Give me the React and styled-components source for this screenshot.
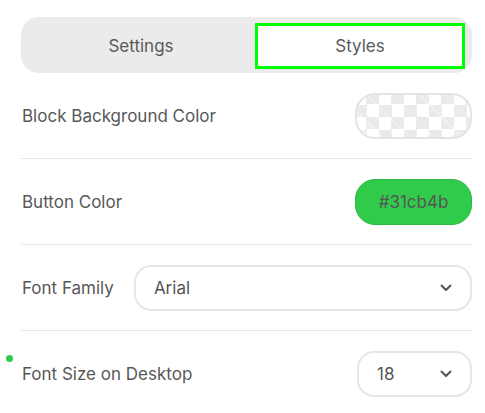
import React from "react";
import styled, { createGlobalStyle } from "styled-components";

const Global = createGlobalStyle`
  html, body { margin: 0; padding: 0; background: #fff; }
  body { font-family: Inter, "Noto Sans", "Liberation Sans", sans-serif; color: #575757; }
  * { box-sizing: border-box; }
`;

const Panel = styled.div`
  width: 485px;
  padding: 17px 13px 0 21px;
`;

const TabBar = styled.div`
  display: flex;
  height: 56px;
  padding: 6px 7px 4px 6px;
  background: #ebebeb;
  border-radius: 18px;
`;

const Tab = styled.div`
  display: flex;
  align-items: center;
  justify-content: center;
  height: 46px;
  font-size: 17px;
  color: #5a5a5a;
  ${(p) =>
    p.$active
      ? `width: 210px; background: #fff; border: 3px solid #00ff00;`
      : `flex: 1;`}
`;

const Row = styled.div`
  position: relative;
  display: flex;
  align-items: center;
  justify-content: space-between;
  gap: 20px;
  height: 86px;
  border-bottom: ${(p) => (p.$last ? "none" : "1px solid #e6e6e6")};
`;

const Label = styled.span`
  font-size: 17px;
  color: #585858;
  white-space: nowrap;
  padding-left: 1px;
`;

const Swatch = styled.div`
  width: 117px;
  height: 46px;
  border-radius: 20px;
  display: flex;
  align-items: center;
  justify-content: center;
  font-size: 17px;
  color: #555;
  ${(p) =>
    p.$color
      ? `background: ${p.$color}; border: 1px solid #2db846;`
      : `border: 2px solid #e4e4e4;
         background:
           repeating-linear-gradient(45deg, transparent 0 8.3px, rgba(255,255,255,0.45) 8.3px 9.3px),
           conic-gradient(#eaeaea 25%, #fff 0 50%, #eaeaea 0 75%, #fff 0) -3px -3px / 25px 25px;`}
`;

const Select = styled.div`
  display: flex;
  align-items: center;
  justify-content: space-between;
  height: 46px;
  padding: 0 18px 0 18px;
  border: 2px solid #e6e6e6;
  border-radius: 17px;
  font-size: 17px;
  color: #555;
  ${(p) => (p.$width ? `width: ${p.$width}px;` : `flex: 1;`)}
`;

const Dot = styled.span`
  position: absolute;
  left: -15px;
  top: 24px;
  width: 7px;
  height: 7px;
  border-radius: 50%;
  background: #31cb4b;
`;

const Chevron = () => (
  <svg width="12" height="8" viewBox="0 0 12 8" fill="none">
    <path d="M1.5 1.5 L6 6 L10.5 1.5" stroke="#555" strokeWidth="2" strokeLinecap="round" strokeLinejoin="round" />
  </svg>
);

export default function App() {
  return (
    <Panel>
      <Global />
      <TabBar>
        <Tab>Settings</Tab>
        <Tab $active>Styles</Tab>
      </TabBar>
      <Row>
        <Label>Block Background Color</Label>
        <Swatch />
      </Row>
      <Row>
        <Label>Button Color</Label>
        <Swatch $color="#31cb4b">#31cb4b</Swatch>
      </Row>
      <Row>
        <Label>Font Family</Label>
        <Select>
          <span>Arial</span>
          <Chevron />
        </Select>
      </Row>
      <Row $last>
        <Dot />
        <Label>Font Size on Desktop</Label>
        <Select $width={115}>
          <span>18</span>
          <Chevron />
        </Select>
      </Row>
    </Panel>
  );
}
